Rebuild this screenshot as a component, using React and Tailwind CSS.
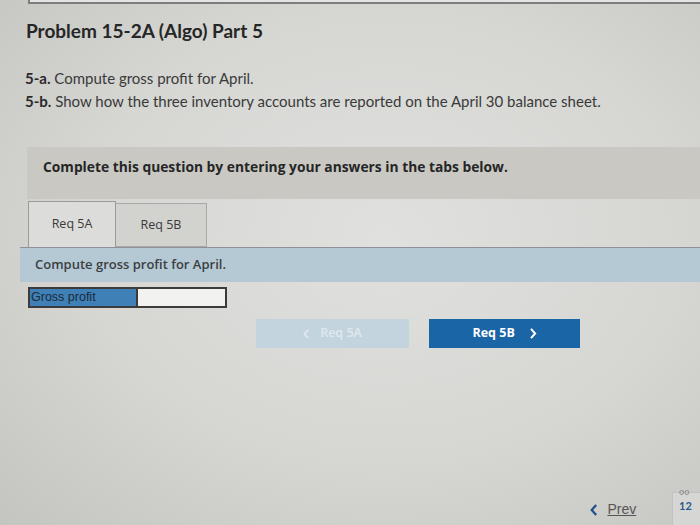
import React from 'react';

const font = { fontFamily: '"Lato", "Open Sans", sans-serif' };
const ui = { fontFamily: '"Open Sans", sans-serif' };

function Chevron({ dir = 'right', color = '#fff', size = 10 }) {
  const d = dir === 'right' ? 'M2 1 L6.5 6 L2 11' : 'M6 1 L1.5 6 L6 11';
  return (
    <svg width={size * 0.7} height={size} viewBox="0 0 8 12">
      <path d={d} stroke={color} strokeWidth="2.2" fill="none" />
    </svg>
  );
}

export default function App() {
  return (
    <div
      className="w-[700px] h-[525px] overflow-hidden relative bg-[radial-gradient(ellipse_at_55%_45%,#e0e0de_0%,#d6d6d3_55%,#c4c4c1_100%)]"
      style={font}
    >
      {/* top frame edge */}
      <div className="ml-[28px] h-[4px] border-b-2 border-l-2 border-[#7d7d7d] bg-[#e4e4e2]" />

      <div className="pl-[26px] pt-[15px]">
        <h1 className="text-[19px] leading-[24px] font-bold text-[#262626]">Problem 15-2A (Algo) Part 5</h1>
      </div>

      <div className="pl-[25px] pt-[24px] text-[15px] leading-[23px] text-[#3a3a3a]">
        <p><span className="font-bold text-[#2a2a2a]">5-a.</span> Compute gross profit for April.</p>
        <p><span className="font-bold text-[#2a2a2a]">5-b.</span> Show how the three inventory accounts are reported on the April 30 balance sheet.</p>
      </div>

      {/* instructions banner */}
      <div className="ml-[27px] mt-[34px] h-[52px] bg-[#c9c8c3] pl-[16px] pt-[10px]">
        <p className="text-[13.8px] leading-[20px] font-bold text-[#262626]" style={ui}>
          Complete this question by entering your answers in the tabs below.
        </p>
      </div>

      {/* tabs */}
      <div className="ml-[28px] mt-[2px] flex items-end h-[46px]" style={ui}>
        <div className="w-[88px] h-[46px] border border-b-0 border-[#9a9a9a] bg-[#dcdcda] flex items-center justify-center text-[12.5px] text-[#3a3a3a]">
          Req 5A
        </div>
        <div className="w-[91px] h-[44px] border border-l-0 border-[#a8a8a8] bg-[#d2d2cf] flex items-center justify-center text-[12.5px] text-[#3a3a3a]">
          Req 5B
        </div>
      </div>

      {/* prompt bar */}
      <div className="ml-[20px] h-[35px] bg-[#b5c9d5] border-t border-[#8c9297] flex items-center pl-[15px]">
        <p className="text-[13px] font-semibold text-[#3b3f42]" style={ui}>
          Compute gross profit for April.
        </p>
      </div>

      {/* answer row */}
      <div className="ml-[28px] mt-[5px] flex w-[199px] h-[21px] border-2 border-[#3b3b3b]">
        <div className="w-[106px] bg-[#3f80b6] flex items-center pl-[1px] text-[12.5px] text-[#1b2a3a]" style={{ fontFamily: '"Liberation Sans", sans-serif' }}>
          Gross profit
        </div>
        <div className="flex-1 bg-[#f2f2f0] border-l-2 border-[#3b3b3b]" />
      </div>

      {/* nav buttons */}
      <div className="ml-[256px] mt-[11px] flex gap-[20px]" style={ui}>
        <div className="w-[153px] h-[29px] bg-[#c3d4de] flex items-center justify-center gap-[10px] text-[12.5px] font-semibold text-[#dfe8ee]">
          <Chevron dir="left" color="#dfe8ee" size={10} />
          <span>Req 5A</span>
        </div>
        <div className="w-[151px] h-[29px] bg-[#1a65a6] flex items-center justify-center gap-[14px] text-[12.5px] font-bold text-white">
          <span>Req 5B</span>
          <Chevron dir="right" color="#ffffff" size={11} />
        </div>
      </div>

      {/* footer nav */}
      <div className="absolute left-[590px] top-[499px] flex items-center gap-[9px]">
        <Chevron dir="left" color="#1f4f8a" size={12} />
        <span className="text-[14px] text-[#555] underline" style={{ fontFamily: '"Liberation Sans", sans-serif' }}>Prev</span>
      </div>
      <div className="absolute left-[672px] top-[492px] w-[40px] h-[40px] border border-[#c2c2c0] bg-[#d6d6d4] pl-[6px]">
        <div className="text-[8px] leading-[6px] text-[#777] -mt-[4px]">&#9675;&#9675;</div>
        <div className="text-[11px] font-bold text-[#2b5a8a] leading-[13px] mt-[4px]">12</div>
      </div>
    </div>
  );
}
